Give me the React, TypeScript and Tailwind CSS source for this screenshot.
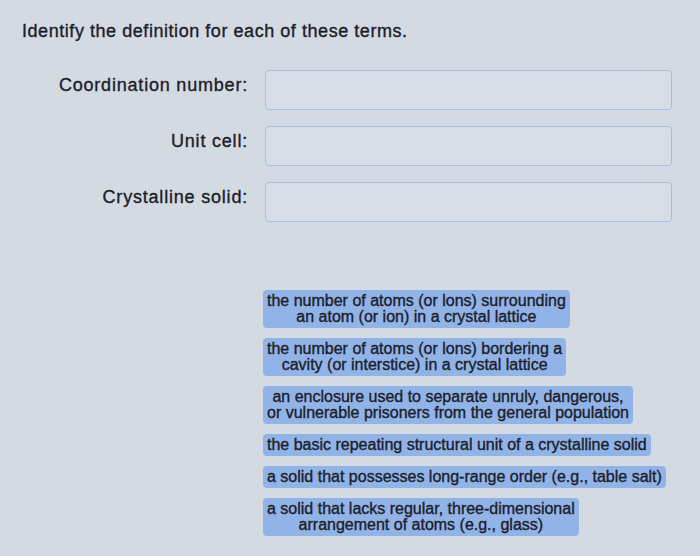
import React from "react";

const defs: string[][] = [
  ["the number of atoms (or lons) surrounding", "an atom (or ion) in a crystal lattice"],
  ["the number of atoms (or lons) bordering a", "cavity (or interstice) in a crystal lattice"],
  ["an enclosure used to separate unruly, dangerous,", "or vulnerable prisoners from the general population"],
  ["the basic repeating structural unit of a crystalline solid"],
  ["a solid that possesses long-range order (e.g., table salt)"],
  ["a solid that lacks regular, three-dimensional", "arrangement of atoms (e.g., glass)"],
];

const terms = ["Coordination number:", "Unit cell:", "Crystalline solid:"];

export default function App() {
  return (
    <div
      className="w-[700px] h-[556px] overflow-hidden bg-[#d4dae1] text-[#1b202a] pl-[22px] pt-[20px] [-webkit-text-stroke:0.35px_#1b202a]"
      style={{ fontFamily: '"Liberation Sans", Arial, sans-serif' }}
    >
      <div className="text-[18px] leading-[22px] tracking-[0.55px]">
        Identify the definition for each of these terms.
      </div>
      <div className="mt-[28px] flex flex-col gap-[16px]">
        {terms.map((t) => (
          <div key={t} className="flex items-center">
            <div className="w-[226px] text-right text-[18px] leading-[22px] tracking-[0.8px] -mt-[10px]">{t}</div>
            <div className="ml-[17px] w-[407px] h-[40px] rounded-[4px] border border-[#a3bfe6] bg-[#d6dde4]" />
          </div>
        ))}
      </div>
      <div className="mt-[68px] ml-[241px] flex flex-col items-start gap-[10px]">
        {defs.map((d, i) => (
          <div
            key={i}
            className="rounded-[4px] bg-[#92b3e7] px-[4px] py-[3px] text-center text-[16px] leading-[16px]"
          >
            {d.map((l, j) => (
              <div key={j}>{l}</div>
            ))}
          </div>
        ))}
      </div>
    </div>
  );
}
